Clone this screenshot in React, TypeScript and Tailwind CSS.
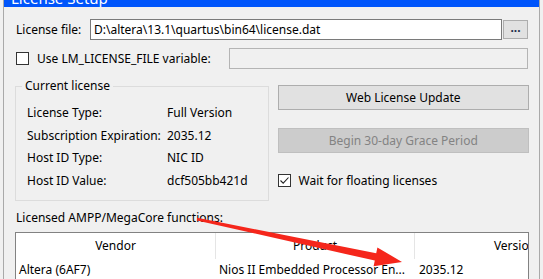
import React from 'react';

const font = { fontFamily: '"Noto Sans", "Segoe UI", Arial, sans-serif' };

const licenseRows: [string, string][] = [
  ['License Type:', 'Full Version'],
  ['Subscription Expiration:', '2035.12'],
  ['Host ID Type:', 'NIC ID'],
  ['Host ID Value:', 'dcf505bb421d'],
];

function CheckBox({ checked }: { checked?: boolean }) {
  return (
    <div className="w-[13px] h-[13px] shrink-0 border border-[#333333] bg-white flex items-center justify-center">
      {checked && (
        <svg width="11" height="11" viewBox="0 0 11 11">
          <path d="M1.5 5.5 L4.2 8.2 L9.5 2.5" fill="none" stroke="#222" strokeWidth="1.1" />
        </svg>
      )}
    </div>
  );
}

function RedArrow() {
  // annotation drawn over the dialog
  return (
    <svg className="absolute inset-0 pointer-events-none" width="543" height="279" viewBox="0 0 543 279">
      <polygon
        points="197.2,217.8 376.2,253.2 377.4,247.4 402,262 373.6,266.2 374.8,260.6 196.8,220.4"
        fill="#f5261b"
      />
    </svg>
  );
}

export default function App() {
  return (
    <div className="relative w-[543px] h-[279px] overflow-hidden bg-[#f0f0f0] text-[12px] text-black" style={font}>
      <div className="ml-[3px] w-[537px] h-full border-x border-[#a9a9a9] flex flex-col">
        {/* title bar, mostly scrolled off */}
        <div className="h-[7px] shrink-0 bg-[#0055fb] overflow-hidden">
          <div className="pl-[7px] -mt-[10px] text-[15px] leading-[16px] text-white">License Setup</div>
        </div>

        <div className="pl-[12px] pr-[10px]">
          <div className="mt-[12px] flex items-center h-[21px]">
            <span className="w-[74px] shrink-0">License file:</span>
            <div className="w-[412px] h-[21px] border border-[#7a7a7a] bg-white flex items-center pl-[3px] overflow-hidden whitespace-nowrap">
              D:\altera\13.1\quartus\bin64\license.dat
            </div>
            <button className="ml-[1px] w-[25px] h-[19px] border border-[#adadad] bg-[#e1e1e1] flex items-center justify-center leading-none pb-[4px] font-bold text-[#1a2a4a]">
              ...
            </button>
          </div>

          <div className="mt-[8px] flex items-center h-[21px]">
            <CheckBox />
            <span className="ml-[8px] w-[192px] shrink-0">Use LM_LICENSE_FILE variable:</span>
            <div className="w-[299px] h-[21px] border border-[#b4b4b4] bg-[#f0f0f0]" />
          </div>

          <div className="mt-[9px] flex gap-[9px] -ml-[1px]">
            <fieldset className="w-[254px] border border-[#dcdcdc] px-[6px] pb-[8px]">
              <legend className="px-[3px] leading-[16px]">Current license</legend>
              <div className="pt-[8px] pl-[5px]">
                {licenseRows.map(([k, v]) => (
                  <div key={k} className="h-[22.5px] flex items-center">
                    <span className="w-[140px] shrink-0">{k}</span>
                    <span>{v}</span>
                  </div>
                ))}
              </div>
            </fieldset>

            <div className="w-[252px] pt-[7px] flex flex-col">
              <button className="h-[25px] border border-[#adadad] bg-[#e1e1e1]">Web License Update</button>
              <button className="mt-[18px] h-[25px] border border-[#bfbfbf] bg-[#cccccc] text-[#838383]">
                Begin 30-day Grace Period
              </button>
              <div className="mt-[20px] flex items-center h-[15px]">
                <CheckBox checked />
                <span className="ml-[8px]">Wait for floating licenses</span>
              </div>
            </div>
          </div>

          <div className="mt-[9px] leading-[16px]">Licensed AMPP/MegaCore functions:</div>

          <div className="mt-[6px] -ml-[1px] w-[514px] border border-[#828282] bg-white overflow-hidden">
            <div className="flex h-[26px] whitespace-nowrap">
              <div className="w-[200px] shrink-0 flex items-center justify-center border-r border-[#e5e5e5]">Vendor</div>
              <div className="w-[199px] shrink-0 flex items-center justify-center border-r border-[#e5e5e5]">Product</div>
              <div className="w-[200px] shrink-0 flex items-center justify-center">Version</div>
            </div>
            <div className="flex h-[22px] items-center whitespace-nowrap">
              <div className="w-[200px] shrink-0 pl-[3px]">Altera (6AF7)</div>
              <div className="w-[199px] shrink-0 pl-[3px]">Nios II Embedded Processor En...</div>
              <div className="w-[200px] shrink-0 pl-[4px]">2035.12</div>
            </div>
          </div>
        </div>
      </div>
      <RedArrow />
    </div>
  );
}
